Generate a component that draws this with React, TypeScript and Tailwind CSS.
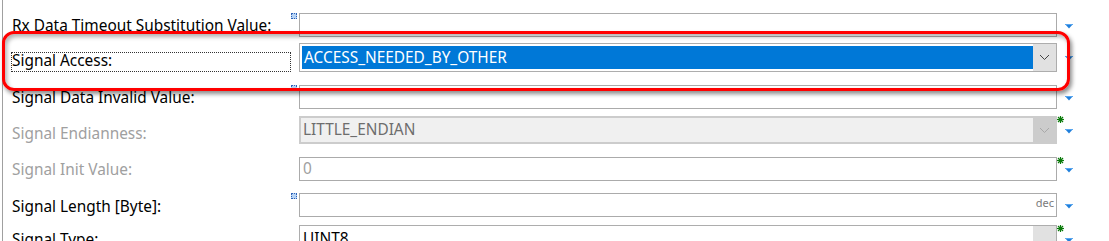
import { ReactNode } from 'react'

type Row = {
  label: string
  kind: 'text' | 'select'
  value?: string
  mt: string
  h: string
  labelPad: string
  disabled?: boolean
  selected?: boolean
  focus?: boolean
  marker?: boolean
  required?: boolean
  suffix?: string
}

const rows: Row[] = [
  { label: 'Rx Data Timeout Substitution Value:', kind: 'text', mt: 'mt-[13px]', h: 'h-[24px]', labelPad: 'pt-[3px]', marker: true },
  { label: 'Signal Access:', kind: 'select', value: 'ACCESS_NEEDED_BY_OTHER', mt: 'mt-[6px]', h: 'h-[29px]', labelPad: 'pt-[8px]', selected: true, focus: true },
  { label: 'Signal Data Invalid Value:', kind: 'text', mt: 'mt-[13px]', h: 'h-[24px]', labelPad: 'pt-[3px]', marker: true },
  { label: 'Signal Endianness:', kind: 'select', value: 'LITTLE_ENDIAN', mt: 'mt-[7px]', h: 'h-[28px]', labelPad: 'pt-[8px]', disabled: true, required: true },
  { label: 'Signal Init Value:', kind: 'text', value: '0', mt: 'mt-[13px]', h: 'h-[24px]', labelPad: 'pt-[3px]', disabled: true, required: true },
  { label: 'Signal Length [Byte]:', kind: 'text', mt: 'mt-[12px]', h: 'h-[24px]', labelPad: 'pt-[4px]', marker: true, suffix: 'dec' },
  { label: 'Signal Type:', kind: 'select', value: 'UINT8', mt: 'mt-[8px]', h: 'h-[28px]', labelPad: 'pt-[5px]', required: true },
]

function Chevron({ color }: { color: string }) {
  return (
    <svg width="11" height="7" viewBox="0 0 11 7">
      <path d="M1 1 L5.5 5.5 L10 1" fill="none" stroke={color} strokeWidth="1" />
    </svg>
  )
}

function Asterisk() {
  return (
    <svg width="7" height="7" viewBox="0 0 7 7">
      <g stroke="#0a7a0a" strokeWidth="1.2">
        <line x1="3.5" y1="0" x2="3.5" y2="7" />
        <line x1="0" y1="3.5" x2="7" y2="3.5" />
        <line x1="1" y1="1" x2="6" y2="6" />
        <line x1="6" y1="1" x2="1" y2="6" />
      </g>
    </svg>
  )
}

function DropArrow() {
  return (
    <svg width="8" height="5" viewBox="0 0 8 5">
      <polygon points="0,0 8,0 4,4.5" fill="#1f7fdc" />
      <line x1="0" y1="0.5" x2="8" y2="0.5" stroke="#5aa6ee" strokeWidth="1" />
    </svg>
  )
}

function Field({ row }: { row: Row }) {
  if (row.kind === 'select') {
    let body: ReactNode
    if (row.selected) {
      body = (
        <div className="flex-1 h-full flex border border-[#adadad] bg-white">
          <div className="flex-1 m-[2px] mr-0 bg-[#0078d7] text-white flex items-center pl-[2px]">{row.value}</div>
          <div className="w-[23px] bg-[#e1e1e1] flex items-center justify-center">
            <Chevron color="#444" />
          </div>
        </div>
      )
    } else if (row.disabled) {
      body = (
        <div className="flex-1 h-full flex border-2 border-[#cccccc] bg-[#f0f0f0]">
          <div className="flex-1 text-[#6d6d6d] flex items-center pl-[2px]">{row.value}</div>
          <div className="w-[22px] bg-[#cccccc] flex items-center justify-center">
            <Chevron color="#a8a8a8" />
          </div>
        </div>
      )
    } else {
      body = (
        <div className="flex-1 h-full flex border border-[#adadad] bg-white">
          <div className="flex-1 text-black flex items-center pl-[3px]">{row.value}</div>
          <div className="w-[23px] bg-[#e1e1e1] flex items-end justify-center pb-[3px]">
            <Chevron color="#444" />
          </div>
        </div>
      )
    }
    return body
  }
  return (
    <div className="flex-1 h-full relative border border-[#ababab] bg-white flex items-center pl-[3px]">
      <span className="text-[#a0a0a0]">{row.value}</span>
      {row.suffix && (
        <span className="absolute right-[2px] top-[2px] text-[11px] leading-[14px] text-[#7a7a7a]">{row.suffix}</span>
      )}
    </div>
  )
}

export default function App() {
  return (
    <div
      className="relative w-[1109px] h-[241px] overflow-hidden bg-white text-[15.4px] leading-[20px]"
      style={{ fontFamily: '"Noto Sans", "Open Sans", sans-serif' }}
    >
      <div className="ml-[2px] h-full border-l border-[#a0a0a0] flex flex-col">
        {rows.map(row => (
          <div key={row.label} className={`flex ${row.mt} ${row.h} shrink-0`}>
            <div className={`w-[288px] pl-[8px] ${row.labelPad}`}>
              <span
                className={`inline-block w-[280px] h-[20px] leading-[16px] border border-dotted ${row.focus ? 'border-[#333]' : 'border-transparent'} ${row.disabled ? 'text-[#a0a0a0]' : 'text-black'}`}
              >
                {row.label}
              </span>
            </div>
            <div className="w-[8px]">
              {row.marker && (
                <div className="w-[6px] h-[6px] border border-dotted border-[#2f62b8] bg-[#b6d3f5]" />
              )}
            </div>
            <div className="w-[758px] h-full flex">
              <Field row={row} />
            </div>
            <div className="w-[8px] h-full">{row.required && <Asterisk />}</div>
            <div className="w-[10px] h-full flex items-center pt-[2px]">
              <DropArrow />
            </div>
          </div>
        ))}
      </div>

      {/* red callout drawn over the Signal Access row */}
      <div className="absolute left-[2px] top-[31px] w-[1068px] h-[60px] rounded-[12px] border-[3px] border-[#ff0000] shadow-[2px_3px_4px_rgba(0,0,0,0.45),inset_2px_3px_4px_rgba(0,0,0,0.3)]" />
    </div>
  )
}
